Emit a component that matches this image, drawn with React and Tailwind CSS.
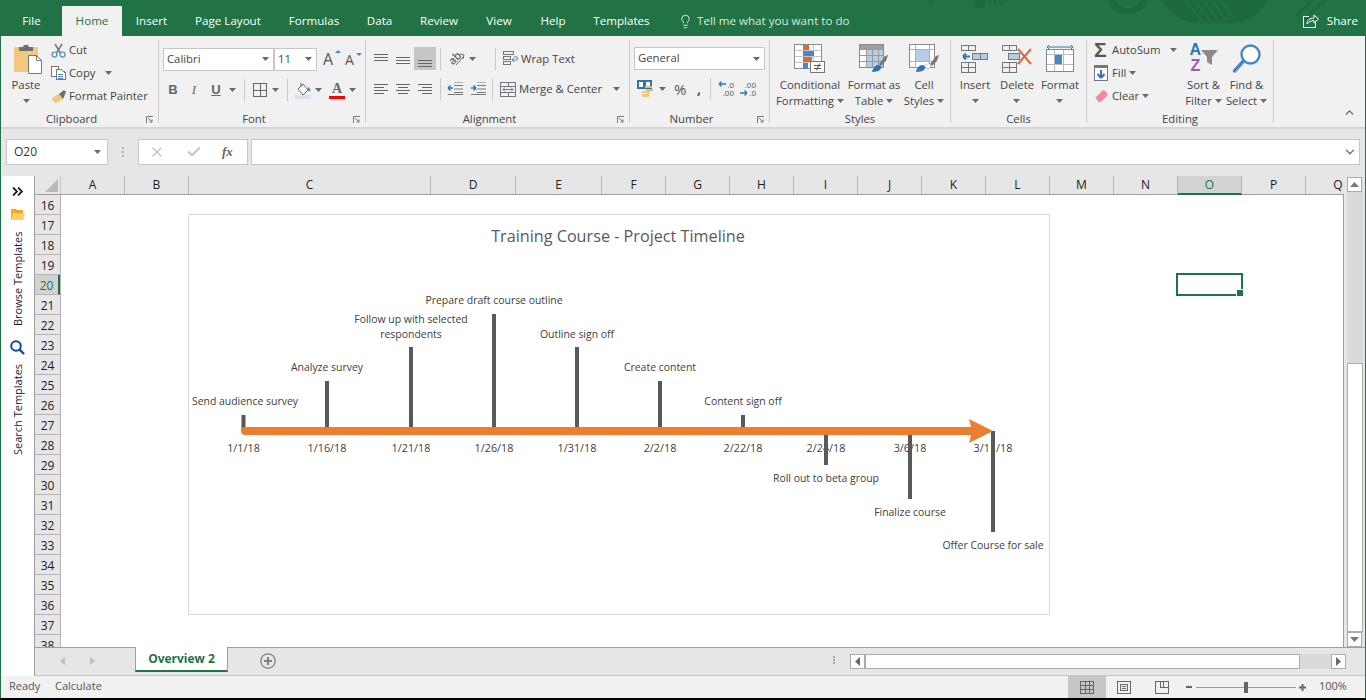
import React from "react";
import { ChevronDown, ChevronUp, Check, X, Lightbulb } from "lucide-react";

const tabs = [
  { name: "File", w: "w-[61px]" },
  { name: "Home", w: "w-[60px]", active: true },
  { name: "Insert", w: "w-[59px]" },
  { name: "Page Layout", w: "w-[94px]" },
  { name: "Formulas", w: "w-[78px]" },
  { name: "Data", w: "w-[53px]" },
  { name: "Review", w: "w-[66px]" },
  { name: "View", w: "w-[54px]" },
  { name: "Help", w: "w-[54px]" },
  { name: "Templates", w: "w-[83px]" },
];

const columns = [
  { n: "A", w: "w-[64px]" },
  { n: "B", w: "w-[64px]" },
  { n: "C", w: "w-[242px]" },
  { n: "D", w: "w-[85px]" },
  { n: "E", w: "w-[86px]" },
  { n: "F", w: "w-[64px]" },
  { n: "G", w: "w-[64px]" },
  { n: "H", w: "w-[64px]" },
  { n: "I", w: "w-[64px]" },
  { n: "J", w: "w-[64px]" },
  { n: "K", w: "w-[64px]" },
  { n: "L", w: "w-[64px]" },
  { n: "M", w: "w-[64px]" },
  { n: "N", w: "w-[64px]" },
  { n: "O", w: "w-[64px]", active: true },
  { n: "P", w: "w-[64px]" },
  { n: "Q", w: "w-[39px] pl-[26px]" },
];

const rows = Array.from({ length: 23 }, (_, i) => 16 + i);

// chart milestones, coordinates are page pixels (svg viewBox starts at the frame corner)
const milestones = [
  { x: 243.5, date: "1/1/18", end: 415, label: ["Send audience survey"], lx: 245, ly: 405 },
  { x: 327, date: "1/16/18", end: 381, label: ["Analyze survey"], ly: 371 },
  { x: 411, date: "1/21/18", end: 347, label: ["Follow up with selected", "respondents"], ly: 323 },
  { x: 494, date: "1/26/18", end: 314, label: ["Prepare draft course outline"], ly: 304 },
  { x: 577, date: "1/31/18", end: 347, label: ["Outline sign off"], ly: 338 },
  { x: 660, date: "2/2/18", end: 381, label: ["Create content"], ly: 371 },
  { x: 743, date: "2/22/18", end: 415, label: ["Content sign off"], ly: 405 },
  { x: 826, date: "2/24/18", end: 465, label: ["Roll out to beta group"], ly: 482 },
  { x: 910, date: "3/6/18", end: 499, label: ["Finalize course"], ly: 516 },
  { x: 993, date: "3/11/18", end: 532, label: ["Offer Course for sale"], ly: 549 },
];

const Caret = ({ className = "" }) => (
  <svg width="7" height="4" viewBox="0 0 7 4" className={`shrink-0 ${className}`}>
    <path d="M0 0h7L3.5 4z" fill="#6a6a6a" />
  </svg>
);

const Sep = ({ className = "" }) => <div className={`w-px h-[22px] bg-[#c9c9c9] shrink-0 ${className}`} />;

const Group = ({ label, width, launcher = true, children }) => (
  <div className={`flex flex-col my-[4px] border-r border-[#c9c9c9] shrink-0 ${width}`}>
    <div className="flex-1 flex min-h-0">{children}</div>
    <div className={`relative h-[14px] pt-[4px] leading-[12px] text-center text-[11.3px] text-[#444] ${launcher ? "pr-[16px]" : ""}`}>
      {label}
      {launcher && (
        <svg width="8" height="8" viewBox="0 0 8 8" className="absolute right-[4px] top-[7px]">
          <path d="M.5 7V.5H7M2 2l4 4M6 3.5V6H3.5" fill="none" stroke="#777" />
        </svg>
      )}
    </div>
  </div>
);

const BigBtn = ({ width, icon, lines }) => (
  <div className={`flex flex-col items-center pt-[4px] shrink-0 ${width}`}>
    <div className="h-[30px] flex items-center justify-center">{icon}</div>
    <div className="mt-[3px] text-[11.3px] leading-[16px] text-[#444] text-center whitespace-nowrap">
      <div>{lines[0]}</div>
      <div className="flex items-center justify-center gap-[3px] h-[16px]">
        {lines[1]}
        <Caret />
      </div>
    </div>
  </div>
);

const Combo = ({ width, text }) => (
  <div className={`h-[23px] bg-white border border-[#c6c6c6] flex items-center justify-between pl-[3px] pr-[4px] text-[11.3px] text-[#444] shrink-0 ${width}`}>
    <span>{text}</span>
    <Caret />
  </div>
);

const SmallRow = ({ icon, text, caret }) => (
  <div className="h-[20px] flex items-center text-[11.3px] text-[#444] whitespace-nowrap">
    <div className="w-[18px] shrink-0 flex items-center">{icon}</div>
    <span>{text}</span>
    {caret}
  </div>
);

const Lines = ({ ys, xs }) => (
  <svg width="16" height="16" viewBox="0 0 16 16" shapeRendering="crispEdges">
    {ys.map((y, i) => (
      <rect key={y} x={xs[i][0]} y={y} width={xs[i][1]} height="1" fill="#666" />
    ))}
  </svg>
);

const PasteIcon = () => (
  <svg width="30" height="30" viewBox="0 0 30 30" className="ml-[4px]">
    <rect x="1" y="3" width="24" height="25" rx="1" fill="#f0c97f" />
    <path d="M6 7V3h4c0-3 6-3 6 0h4v4z" fill="#6f6f6f" />
    <path d="M15.5 11.5h8l5 5v13h-13z" fill="#fff" stroke="#777" />
    <path d="M23.5 11.5v5h5" fill="none" stroke="#777" />
  </svg>
);

const CutIcon = () => (
  <svg width="15" height="15" viewBox="0 0 15 15" fill="none">
    <path d="M4 1l5.5 9M11 1L5.5 10" stroke="#777" strokeWidth="1.5" />
    <circle cx="3.5" cy="11.5" r="2.5" stroke="#4a86c5" strokeWidth="1.2" />
    <circle cx="11.5" cy="11.5" r="2.5" stroke="#4a86c5" strokeWidth="1.2" />
  </svg>
);

const CopyIcon = () => (
  <svg width="15" height="14" viewBox="0 0 15 14" fill="#fff" shapeRendering="crispEdges">
    <path d="M.5.5h7v10h-7z" stroke="#777" />
    <path d="M5.5 3.5h5l3.5 3v7h-8.500z" stroke="#777" />
    <path d="M7 8h5M7 10h5M7 12h5" stroke="#4a86c5" />
  </svg>
);

const PainterIcon = () => (
  <svg width="16" height="15" viewBox="0 0 16 15">
    <path d="M1 9l7-4 4 5-7 4c-2 0-4-3-4-5z" fill="#f0c97f" />
    <path d="M8 5l5-4 2 2-3 7z" fill="#6f6f6f" />
  </svg>
);

const BordersIcon = () => (
  <svg width="14" height="14" viewBox="0 0 14 14" fill="none" stroke="#666" shapeRendering="crispEdges">
    <path d="M.5.5h13v13H.5zM7 .5v13M.5 7h13" />
  </svg>
);

const FillIcon = () => (
  <svg width="17" height="17" viewBox="0 0 17 17">
    <rect x="0" y="13" width="16" height="4" fill="#d5e4f3" />
    <path d="M3 7l5-5 5 6-5 5z" fill="#fff" stroke="#666" />
    <path d="M6 1v4" stroke="#666" />
    <path d="M13 5c2 1 3 3 2 5-1-1-2-2-3-2z" fill="#4a86c5" />
  </svg>
);

const FontColorIcon = () => (
  <div className="w-[16px] flex flex-col items-center font-bold text-[14px] leading-[13px] text-[#666]">
    A
    <div className="w-[16px] h-[3px] mt-[1px] bg-[#ff0000]" />
  </div>
);

const OrientIcon = () => (
  <div className="relative w-[16px] h-[16px]">
    <span className="absolute -left-[1px] top-[1px] text-[11px] leading-[12px] font-semibold text-[#666] rotate-[-45deg]">ab</span>
    <svg width="16" height="16" viewBox="0 0 16 16" fill="none" className="absolute left-0 top-0">
      <path d="M7 14l7-8M11 3l4 1-1 4" stroke="#666" />
    </svg>
  </div>
);

const WrapIcon = () => (
  <svg width="16" height="15" viewBox="0 0 16 15" fill="none" stroke="#777" shapeRendering="crispEdges">
    <path d="M.5.5h10v3H.5zM.5 5.500h7v3h-7zM.5 10.500h7v3h-7z" />
    <path d="M9 9h5c1 0 1-3 0-3h-3M9 9l2-2M9 9l2 2" stroke="#4a86c5" shapeRendering="auto" />
  </svg>
);

const MergeIcon = () => (
  <svg width="16" height="15" viewBox="0 0 16 15" fill="none" stroke="#777" shapeRendering="crispEdges">
    <path d="M.5.5h15v14H.5zM.5 4.500h15M.5 10.500h15M8 .5v4M8 10.500v4" />
    <path d="M3 7.500h10M3 7.500l2-2M3 7.500l2 2M13 7.500l-2-2M13 7.500l-2 2" stroke="#4a86c5" shapeRendering="auto" />
  </svg>
);

const IndentIcon = ({ flip }) => (
  <svg width="16" height="14" viewBox="0 0 16 14" fill="none">
    <path d="M7 1h9M7 4.500h9M7 8h9M7 11.500h9M1 13.500h15" stroke="#777" transform="translate(0 -1)" />
    <path d={flip ? "M6 6H1M1 6l2.500-2.500M1 6l2.500 2.500" : "M1 6h5M6 6L3.500 3.500M6 6L3.500 8.500"} stroke="#2f75b5" strokeWidth="1.5" />
  </svg>
);

const CurrencyIcon = () => (
  <svg width="18" height="18" viewBox="0 0 18 18" shapeRendering="crispEdges">
    <rect x="0" y="0" width="15" height="9" fill="#2f75b5" />
    <rect x="2" y="2" width="11" height="5" fill="#fff" />
    <rect x="6" y="2" width="3" height="5" fill="#2f75b5" />
    <rect x="9" y="9" width="7" height="2" fill="#e9b868" />
    <rect x="5" y="11" width="8" height="2" fill="#f0c97f" />
    <rect x="8" y="6" width="7" height="2" fill="#e9b868" />
    <rect x="5" y="14" width="7" height="3" fill="#f0c97f" />
  </svg>
);

const DecIcon = ({ more }) => (
  <div className="relative w-[16px] h-[16px] text-[8px] leading-[8px] font-medium text-[#555] text-right">
    <div>{more ? ".0" : ".00"}</div>
    <div>{more ? ".00" : ".0"}</div>
    <svg width="8" height="6" viewBox="0 0 8 6" className={more ? "absolute left-0 top-0" : "absolute left-0 bottom-[1px]"}>
      <path d={more ? "M8 3H1M1 3l2.500-2.500M1 3l2.500 2.500" : "M0 3h7M7 3L4.500.5M7 3L4.500 5.500"} stroke="#2f75b5" strokeWidth="1.3" fill="none" />
    </svg>
  </div>
);

const CondIcon = () => (
  <svg width="32" height="30" viewBox="0 0 32 30" shapeRendering="crispEdges">
    <rect x=".5" y=".5" width="27" height="24" fill="#fff" stroke="#8a8a8a" />
    <path d="M9 1v24M19 1v24M1 6.500h26M1 12.500h26M1 18.500h26" stroke="#c4c4c4" />
    <rect x="9" y="1" width="6" height="5" fill="#d9683f" />
    <rect x="9" y="7" width="11" height="5" fill="#4a86c5" />
    <rect x="9" y="13" width="9" height="5" fill="#d9683f" />
    <rect x="9" y="19" width="5" height="6" fill="#4a86c5" />
    <rect x="16.500" y="17.500" width="14" height="11" fill="#fff" stroke="#777" />
    <path d="M20 21.500h7M20 24.500h7M25.500 19.500l-3 7" stroke="#555" fill="none" shapeRendering="auto" />
  </svg>
);

const TableIcon = () => (
  <svg width="30" height="30" viewBox="0 0 30 30">
    <g shapeRendering="crispEdges">
      <rect x=".5" y=".5" width="24" height="23" fill="#fff" stroke="#8a8a8a" />
      <rect x="1" y="1" width="23" height="4" fill="#9e9e9e" />
      <rect x="7" y="5" width="17" height="18" fill="#b6cde6" />
      <path d="M7 1v23M13 1v23M19 1v23M1 5.500h23M1 11.500h23M1 17.500h23" stroke="#9a9a9a" />
    </g>
    <path d="M20 20l6-8 3-1-2 6-5 5z" fill="#7a7a7a" />
    <path d="M13 28c1-5 5-9 9-6 1 3-2 6-9 6z" fill="#2f75b5" />
  </svg>
);

const StyleIcon = () => (
  <svg width="30" height="30" viewBox="0 0 30 30">
    <g shapeRendering="crispEdges">
      <rect x=".5" y=".5" width="25" height="23" fill="#fff" stroke="#8a8a8a" />
      <rect x="6" y="6" width="14" height="11" fill="#b6cde6" />
      <path d="M1 5.500h24M1 17.500h24M6 1v23M20 1v23" stroke="#b0b0b0" />
    </g>
    <path d="M21 20l6-8 3-1-2 6-5 5z" fill="#7a7a7a" />
    <path d="M7 28c1-5 5-9 9-6 1 3-2 6-9 6z" fill="#2f75b5" />
    <path d="M15 22l5-3 2 3-3 3z" fill="#fff" stroke="#888" strokeWidth=".5" />
  </svg>
);

const InsertIcon = () => (
  <svg width="28" height="28" viewBox="0 0 28 28" fill="none" shapeRendering="crispEdges">
    <path d="M.5.5h14v5H.5zM7.500.5v5M.5 17.500h14v10H.5zM.5 22.500h14M7.500 17.500v10" stroke="#777" />
    <rect x="11.500" y="8.500" width="15" height="6" fill="#b6cde6" stroke="#777" />
    <path d="M19 9v5" stroke="#777" />
    <path d="M9 11.500H2M2 11.500l3-3M2 11.500l3 3" stroke="#2f75b5" strokeWidth="2" shapeRendering="auto" />
  </svg>
);

const DeleteIcon = () => (
  <svg width="30" height="28" viewBox="0 0 30 28" fill="none" shapeRendering="crispEdges">
    <path d="M.5.5h14v5H.5zM7.500.5v5M.5 17.500h14v10H.5zM.5 22.500h14M7.500 17.500v10" stroke="#777" />
    <rect x="6.500" y="8.500" width="11" height="6" fill="#b6cde6" stroke="#777" />
    <path d="M16 3l13 15M29 3L16 18" stroke="#d9683f" strokeWidth="2" shapeRendering="auto" transform="translate(0 1)" />
  </svg>
);

const FormatIcon = () => (
  <svg width="29" height="31" viewBox="0 0 29 31" fill="none" shapeRendering="crispEdges">
    <path d="M1 2h26M1 2l2-2M1 2l2 2M27 2l-2-2M27 2l-2 2" stroke="#2f75b5" transform="translate(0 1)" shapeRendering="auto" />
    <rect x=".5" y="5.500" width="27" height="22" fill="#fff" stroke="#888" />
    <rect x="8" y="10" width="8" height="10" fill="#4a86c5" />
    <path d="M8 6v21M17 6v21M1 10.500h26M1 20.500h26" stroke="#bcbcbc" />
  </svg>
);

const SumIcon = () => (
  <span className="block text-[21px] leading-[20px] font-bold text-[#555] font-['Liberation_Sans',sans-serif]">Σ</span>
);

const FillDownIcon = () => (
  <svg width="14" height="16" viewBox="0 0 14 16" shapeRendering="crispEdges">
    <rect x=".5" y=".5" width="13" height="15" fill="#fff" stroke="#777" />
    <rect x="0" y="0" width="14" height="3" fill="#777" />
    <path d="M7 5v7M7 13L3.500 9M7 13l3.500-4" stroke="#2f75b5" strokeWidth="2" fill="none" shapeRendering="auto" />
  </svg>
);

const EraserIcon = () => (
  <svg width="14" height="13" viewBox="0 0 14 13">
    <path d="M1 8l7-7c1-1 2-1 3 0l2 2c1 1 1 2 0 3l-6 6H4z" fill="#ec8c9c" />
    <path d="M1 8l3 4" stroke="#fff" />
  </svg>
);

const SortIcon = () => (
  <div className="relative w-[30px] h-[30px]">
    <span className="absolute left-[1px] top-[-2px] text-[16px] leading-[16px] font-bold text-[#2f75b5] font-['Liberation_Sans',sans-serif]">A</span>
    <span className="absolute left-[2px] top-[14px] text-[16px] leading-[16px] font-bold text-[#9b59b6] font-['Liberation_Sans',sans-serif]">Z</span>
    <svg width="18" height="16" viewBox="0 0 18 16" className="absolute left-[12px] top-[6px]">
      <path d="M0 0h17l-6 7v8l-5-3V7z" fill="#8a8a8a" />
    </svg>
  </div>
);

const FindIcon = () => (
  <svg width="30" height="30" viewBox="0 0 30 30" fill="none">
    <circle cx="18.500" cy="10.500" r="9" stroke="#4a86c5" strokeWidth="2.400" fill="#fff" />
    <path d="M11.500 17L2.500 27" stroke="#4a86c5" strokeWidth="3.500" strokeLinecap="round" />
  </svg>
);

const Ribbon = () => (
  <div className="h-[93px] bg-[#f1f1f1] border-b-2 border-[#d4d4d4] flex relative shrink-0">
    <Group label="Clipboard" width="w-[158px]">
      <div className="w-[50px] flex flex-col items-center pt-[4px] text-[11.3px] text-[#444]">
        <PasteIcon />
        <div className="mt-[3px] leading-[16px]">Paste</div>
        <Caret className="mt-[6px]" />
      </div>
      <div className="flex flex-col gap-[3px]">
        <SmallRow icon={<CutIcon />} text="Cut" />
        <SmallRow icon={<CopyIcon />} text="Copy" caret={<Caret className="ml-[10px]" />} />
        <SmallRow icon={<PainterIcon />} text="Format Painter" />
      </div>
    </Group>

    <Group label="Font" width="w-[207px]">
      <div className="flex flex-col pt-[7px] pl-[4px]">
        <div className="flex items-center">
          <Combo width="w-[111px]" text="Calibri" />
          <Combo width="w-[43px]" text="11" />
          <span className="ml-[6px] w-[15px] text-[16px] text-[#555] relative">
            A
            <svg width="6" height="3" viewBox="0 0 6 3" className="absolute right-[-3px] top-[3px]"><path d="M0 3h6L3 0z" fill="#4a86c5" /></svg>
          </span>
          <span className="ml-[7px] w-[13px] text-[14px] text-[#555] relative">
            A
            <svg width="6" height="3" viewBox="0 0 6 3" className="absolute right-[-4px] top-[4px]"><path d="M0 0h6L3 3z" fill="#4a86c5" /></svg>
          </span>
        </div>
        <div className="flex items-center h-[22px] mt-[8px] text-[#666] text-[13px] font-['Liberation_Serif',serif]">
          <span className="w-[20px] text-center font-bold font-['Liberation_Sans',sans-serif]">B</span>
          <span className="w-[22px] text-center italic">I</span>
          <span className="w-[22px] text-center font-bold underline font-['Liberation_Sans',sans-serif]">U</span>
          <Caret className="ml-[2px]" />
          <Sep className="ml-[8px]" />
          <div className="ml-[8px]"><BordersIcon /></div>
          <Caret className="ml-[5px]" />
          <Sep className="ml-[8px]" />
          <div className="ml-[7px]"><FillIcon /></div>
          <Caret className="ml-[3px]" />
          <div className="ml-[7px]"><FontColorIcon /></div>
          <Caret className="ml-[4px]" />
        </div>
      </div>
    </Group>

    <Group label="Alignment" width="w-[264px]">
      <div className="flex flex-col pt-[7px] pl-[8px]">
        <div className="flex items-center h-[23px]">
          <Lines ys={[3, 6, 9]} xs={[[0, 14], [0, 14], [0, 14]]} />
          <div className="ml-[6px]"><Lines ys={[6, 9, 12]} xs={[[0, 14], [0, 14], [0, 14]]} /></div>
          <div className="ml-[2px] w-[22px] h-[23px] bg-[#c6c6c6] flex items-center justify-center"><Lines ys={[9, 12, 15]} xs={[[1, 14], [1, 14], [1, 14]]} /></div>
          <Sep className="ml-[4px]" />
          <div className="ml-[8px]"><OrientIcon /></div>
          <Caret className="ml-[4px]" />
          <Sep className="ml-[19px]" />
          <div className="ml-[7px]"><WrapIcon /></div>
          <span className="ml-[2px] mt-[1px] text-[11.3px] text-[#444] whitespace-nowrap">Wrap Text</span>
        </div>
        <div className="flex items-center h-[22px] mt-[8px]">
          <Lines ys={[3, 6, 9, 12]} xs={[[0, 14], [0, 10], [0, 14], [0, 10]]} />
          <div className="ml-[6px]"><Lines ys={[3, 6, 9, 12]} xs={[[0, 14], [2, 10], [0, 14], [2, 10]]} /></div>
          <div className="ml-[6px]"><Lines ys={[3, 6, 9, 12]} xs={[[0, 14], [4, 10], [0, 14], [4, 10]]} /></div>
          <Sep className="ml-[6px]" />
          <div className="ml-[6px]"><IndentIcon flip /></div>
          <div className="ml-[7px]"><IndentIcon /></div>
          <Sep className="ml-[6px]" />
          <div className="ml-[7px]"><MergeIcon /></div>
          <span className="ml-[3px] text-[11.3px] text-[#444] whitespace-nowrap">Merge &amp; Center</span>
          <Caret className="ml-[11px]" />
        </div>
      </div>
    </Group>

    <Group label="Number" width="w-[140px]">
      <div className="flex flex-col pt-[7px] pl-[4px]">
        <Combo width="w-[131px]" text="General" />
        <div className="flex items-center h-[22px] mt-[8px]">
          <div className="ml-[3px]"><CurrencyIcon /></div>
          <Caret className="ml-[4px]" />
          <span className="ml-[8px] w-[14px] text-[15px] text-[#555]">%</span>
          <span className="ml-[9px] w-[8px] text-[14px] font-bold text-[#555] leading-[10px]">,</span>
          <Sep className="ml-[5px]" />
          <div className="ml-[7px]"><DecIcon more /></div>
          <div className="ml-[6px]"><DecIcon /></div>
        </div>
      </div>
    </Group>

    <Group label="Styles" width="w-[181px]" launcher={false}>
      <BigBtn width="w-[80px]" icon={<CondIcon />} lines={["Conditional", "Formatting"]} />
      <BigBtn width="w-[48px]" icon={<TableIcon />} lines={["Format as", "Table"]} />
      <BigBtn width="w-[52px]" icon={<StyleIcon />} lines={["Cell", "Styles"]} />
    </Group>

    <Group label="Cells" width="w-[136px]" launcher={false}>
      <BigBtn width="w-[48px]" icon={<InsertIcon />} lines={["Insert", ""]} />
      <BigBtn width="w-[36px]" icon={<DeleteIcon />} lines={["Delete", ""]} />
      <BigBtn width="w-[50px]" icon={<FormatIcon />} lines={["Format", ""]} />
    </Group>

    <Group label="Editing" width="w-[187px]" launcher={false}>
      <div className="w-[96px] flex flex-col gap-[3px] pl-[7px] shrink-0">
        <SmallRow icon={<SumIcon />} text="AutoSum" caret={<Caret className="ml-[10px]" />} />
        <SmallRow icon={<FillDownIcon />} text="Fill" caret={<Caret className="ml-[3px]" />} />
        <SmallRow icon={<EraserIcon />} text="Clear" caret={<Caret className="ml-[3px]" />} />
      </div>
      <BigBtn width="w-[41px]" icon={<SortIcon />} lines={["Sort &", "Filter"]} />
      <BigBtn width="w-[45px]" icon={<FindIcon />} lines={["Find &", "Select"]} />
    </Group>

    <ChevronUp size={13} strokeWidth={2.5} className="absolute right-[9px] bottom-[8px] text-[#666]" />
  </div>
);

const TitleBar = () => (
  <div className="h-[36px] bg-[#217346] flex items-end relative shrink-0 text-[11.6px] text-white overflow-hidden">
    <svg width="470" height="36" viewBox="896 0 470 36" className="absolute right-0 top-0" fill="#1e693f">
      <path d="M929 0h6l-3 3zM976 0h10v8h-10zM990 0h2v6h-2zM995 0h2v6h-2zM1000 0h2v6h-2zM1005 0h2v3h-2z" />
      <path d="M1110 0a19 14 0 0 0 38 0h-7a12 8 0 0 1-24 0z" />
      <path d="M1163 0c8 15 22 23 36 23h36c14 0 26-10 34-23z" />
      <path d="M1186 0l16 20M1195 0l16 21M1204 0l15 21M1213 0l14 20M1222 0l12 17" stroke="#217346" strokeWidth="1.500" fill="none" />
      <path d="M1296 15l16-15h4l-18 17zM1304 19l20-19h4l-22 21z" />
    </svg>
    <div className="flex items-end relative">
      {tabs.map((t) => (
        <div
          key={t.name}
          className={`${t.w} h-[30px] flex items-center justify-center shrink-0 ${t.active ? "bg-[#f1f1f1] text-[#217346]" : ""}`}
        >
          {t.name}
        </div>
      ))}
    </div>
    <div className="flex items-center h-[30px] ml-[15px] relative text-[#d9e8df]">
      <Lightbulb size={15} strokeWidth={1.25} className="text-white" />
      <span className="ml-[4px]">Tell me what you want to do</span>
    </div>
    <div className="flex items-center h-[30px] ml-auto pr-[7px] relative">
      <svg width="16" height="14" viewBox="0 0 16 14" fill="none" stroke="#fff">
        <path d="M6 2.500H.5v11h12V8" />
        <path d="M4 10c0-4 3-6 7-6V1l4.500 4L11 9V6.500C8 6.500 6 8 4 10z" />
      </svg>
      <span className="ml-[8px]">Share</span>
    </div>
  </div>
);

const FormulaBar = () => (
  <div className="h-[47px] bg-[#e6e6e6] flex pt-[10px] shrink-0">
    <div className="ml-[5px] w-[102px] h-[26px] bg-white border border-[#c6c6c6] flex items-center justify-between pl-[7px] pr-[6px] text-[12px] text-[#333]">
      <span>O20</span>
      <Caret />
    </div>
    <div className="w-[30px] flex flex-col items-center justify-center gap-[2px] h-[26px]">
      <div className="w-[2px] h-[2px] bg-[#b0b0b0]" />
      <div className="w-[2px] h-[2px] bg-[#b0b0b0]" />
      <div className="w-[2px] h-[2px] bg-[#b0b0b0]" />
    </div>
    <div className="w-[110px] h-[26px] bg-white border border-[#c6c6c6] flex items-center text-[#c4c4c4]">
      <X size={16} strokeWidth={2} className="ml-[10px]" />
      <Check size={16} strokeWidth={3} className="ml-[21px]" />
      <span className="ml-[20px] text-[13px] italic font-bold text-[#666] font-['Liberation_Serif',serif]">fx</span>
    </div>
    <div className="ml-[3px] w-[1109px] h-[26px] bg-white border border-[#c6c6c6] flex items-center justify-end pr-[2px]">
      <ChevronDown size={14} strokeWidth={2.5} className="text-[#777]" />
    </div>
  </div>
);

const Chart = () => (
  <svg
    width="862"
    height="401"
    viewBox="188 214 862 401"
    className="absolute left-[127px] top-[19px] font-['Open_Sans',sans-serif]"
  >
    <rect x="188.500" y="214.500" width="861" height="400" fill="#fff" stroke="#d9d9d9" />
    <text x="618" y="242" textAnchor="middle" fontSize="16.200" fill="#595959">
      Training Course - Project Timeline
    </text>
    <g fill="#404040" textAnchor="middle">
      {milestones.map((m) => (
        <text key={m.date} x={m.x} y="452" fontSize="10.800">{m.date}</text>
      ))}
      {milestones.map((m) =>
        m.label.map((line, i) => (
          <text key={line} x={m.lx || m.x} y={m.ly + i * 15} fontSize="10.450">{line}</text>
        ))
      )}
    </g>
    {milestones.map((m) => (
      <rect
        key={m.date}
        x={m.x - 2}
        y={Math.min(m.end, 431)}
        width="4"
        height={Math.abs(m.end - 431)}
        fill="#595959"
      />
    ))}
    <path d="M245 427h726l-2-8 24 12-24 12 2-8H245a4 4 0 0 1 0-8z" fill="#ed7d31" />
  </svg>
);

const Sheet = () => (
  <div className="flex-1 flex flex-col min-w-0">
    <div className="flex-1 flex min-h-0">
      <div className="flex-1 flex flex-col min-w-0">
        {/* column letters */}
        <div className="h-[18px] flex bg-[#e6e6e6] border-b-2 border-[#9e9e9e] text-[12px] leading-[17px] text-[#222] shrink-0 box-content -mb-[1px]">
          <div className="w-[26px] relative shrink-0 border-r border-[#c6c6c6]">
            <svg width="13" height="13" viewBox="0 0 13 13" className="absolute right-[2px] bottom-[2px]">
              <path d="M13 0v13H0z" fill="#b9b9b9" />
            </svg>
          </div>
          {columns.map((c) => (
            <div
              key={c.n}
              className={`${c.w} shrink-0 text-center border-r border-[#b4b4b4] ${c.active ? "bg-[#d2d2d2] text-[#217346] border-b-2 border-b-[#217346] -mb-[1px]" : ""}`}
            >
              {c.n}
            </div>
          ))}
        </div>
        <div className="flex-1 flex min-h-0 overflow-hidden">
          <div className="w-[26px] shrink-0 bg-[#e6e6e6] border-r border-[#b4b4b4]">
            {rows.map((r) => (
              <div
                key={r}
                className={`h-[20px] text-center text-[12px] leading-[21px] border-b border-[#b4b4b4] ${r === 20 ? "bg-[#d2d2d2] text-[#217346] border-r-2 border-r-[#217346]" : "text-[#222]"}`}
              >
                {r}
              </div>
            ))}
          </div>
          <div className="flex-1 relative bg-white border-r border-[#9e9e9e]">
            <Chart />
            {/* selected cell O20 */}
            <div className="absolute left-[1115px] top-[78px] w-[67px] h-[23px] border-2 border-[#217346]">
              <div className="absolute -right-[3px] -bottom-[3px] w-[6px] h-[6px] bg-[#217346] border border-white box-content" />
            </div>
          </div>
        </div>
      </div>
      {/* vertical scrollbar */}
      <div className="w-[21px] bg-[#e6e6e6] flex flex-col items-center pt-[1px] shrink-0">
        <div className="w-[16px] flex-1 flex flex-col bg-[#dadada]">
          <ScrollBtn><svg width="9" height="5" viewBox="0 0 9 5"><path d="M0 5h9L4.500 0z" fill="#777" /></svg></ScrollBtn>
          <div className="h-[171px] shrink-0" />
          <div className="flex-1 bg-white border border-[#ababab]" />
          <ScrollBtn><svg width="9" height="5" viewBox="0 0 9 5"><path d="M0 0h9L4.500 5z" fill="#777" /></svg></ScrollBtn>
        </div>
      </div>
    </div>

    {/* sheet tabs and horizontal scrollbar */}
    <div className="h-[29px] bg-[#e6e6e6] border-t border-[#9e9e9e] border-b border-b-[#c6c6c6] flex items-start shrink-0">
      <svg width="40" height="8" viewBox="0 0 40 8" className="ml-[25px] mt-[9px] shrink-0">
        <path d="M5 0v8L0 4zM30 0v8l5-4z" fill="#c0c0c0" />
      </svg>
      <div className="ml-[35px] -mt-[1px] w-[93px] h-[25px] bg-white border-x border-[#9e9e9e] border-b-2 border-b-[#217346] flex items-center justify-center text-[12px] font-bold text-[#217346] shrink-0">
        Overview 2
      </div>
      <svg width="16" height="16" viewBox="0 0 16 16" className="ml-[32px] mt-[5px] shrink-0" fill="none" stroke="#808080">
        <circle cx="8" cy="8" r="7.200" strokeWidth="1.300" />
        <path d="M8 4v8M4 8h8" strokeWidth="2" />
      </svg>
      <div className="ml-[557px] mt-[8px] flex flex-col gap-[1px] shrink-0">
        <div className="w-[2px] h-[2px] bg-[#a8a8a8]" />
        <div className="w-[2px] h-[2px] bg-[#a8a8a8]" />
        <div className="w-[2px] h-[2px] bg-[#a8a8a8]" />
      </div>
      <div className="ml-[15px] mt-[6px] w-[496px] h-[15px] flex bg-[#dadada] shrink-0">
        <ScrollBtn><svg width="5" height="9" viewBox="0 0 5 9"><path d="M5 0v9L0 4.500z" fill="#666" /></svg></ScrollBtn>
        <div className="w-[435px] bg-white border border-[#ababab]" />
        <div className="flex-1" />
        <ScrollBtn><svg width="5" height="9" viewBox="0 0 5 9"><path d="M0 0v9l5-4.500z" fill="#666" /></svg></ScrollBtn>
      </div>
    </div>
  </div>
);

const ScrollBtn = ({ children }) => (
  <div className="w-[15px] h-[15px] bg-white border border-[#ababab] flex items-center justify-center shrink-0 self-center">
    {children}
  </div>
);

const SidePane = () => (
  <div className="w-[34px] bg-white border-r border-[#9e9e9e] flex flex-col items-center shrink-0 text-[11px] text-[#1a1a2e]">
    <svg width="11" height="9" viewBox="0 0 11 9" className="mt-[11px] shrink-0" fill="none" stroke="#222" strokeWidth="1.800">
      <path d="M1 .5L5 4.500 1 8.500M6 .5l4 4-4 4" />
    </svg>
    <svg width="14" height="13" viewBox="0 0 14 13" className="mt-[12px] shrink-0">
      <path d="M0 1h5l1 1h6v10H0z" fill="#f5a623" />
      <path d="M2 5h12l-2 7H0z" fill="#fbd06b" />
    </svg>
    <div className="mt-[10px] h-[95px] leading-[16px] [writing-mode:vertical-rl] rotate-180 whitespace-nowrap text-center shrink-0">Browse Templates</div>
    <svg width="15" height="15" viewBox="0 0 15 15" className="mt-[14px] shrink-0" fill="none" stroke="#0b46a8">
      <circle cx="6" cy="6" r="4.800" strokeWidth="2" />
      <path d="M9.500 9.500l4.500 4.500" strokeWidth="2.400" />
    </svg>
    <div className="mt-[8px] h-[92px] leading-[16px] [writing-mode:vertical-rl] rotate-180 whitespace-nowrap text-center shrink-0">Search Templates</div>
  </div>
);

const StatusBar = () => (
  <div className="h-[22px] bg-[#f1f1f1] flex items-center shrink-0 text-[11px] text-[#555]">
    <span className="ml-[8px] w-[46px] -mt-[2px]">Ready</span>
    <span className="-mt-[2px]">Calculate</span>
    <div className="ml-auto flex items-center h-[22px]">
      <div className="w-[38px] h-[22px] bg-[#c6c6c6] flex items-center justify-center">
        <svg width="14" height="13" viewBox="0 0 14 13" fill="none" stroke="#666" shapeRendering="crispEdges">
          <path d="M.5.5h13v12H.5zM5 .5v12M9.500.5v12M.5 4.500h13M.5 8.500h13" />
        </svg>
      </div>
      <svg width="14" height="13" viewBox="0 0 14 13" className="ml-[11px]" fill="none" stroke="#666" shapeRendering="crispEdges">
        <path d="M.5.5h13v12H.5zM3.500 3.500h7v6h-7zM5 5.500h4M5 7.500h4" />
      </svg>
      <svg width="14" height="13" viewBox="0 0 14 13" className="ml-[24px]" fill="none" stroke="#666" shapeRendering="crispEdges">
        <path d="M.5.5h13v12H.5zM5.500.5v6h3v-6M8.500 6.500h5" />
      </svg>
      <div className="ml-[17px] w-[6px] h-[2px] bg-[#666]" />
      <div className="ml-[4px] relative w-[100px] h-px bg-[#9a9a9a]">
        <div className="absolute left-[48px] -top-[5px] w-[4px] h-[11px] bg-[#666]" />
      </div>
      <svg width="7" height="7" viewBox="0 0 7 7" className="ml-[3px]" stroke="#666" strokeWidth="2">
        <path d="M0 3.500h7M3.500 0v7" />
      </svg>
      <span className="ml-[13px] mr-[19px] w-[27px] -mt-[2px]">100%</span>
    </div>
  </div>
);

export default function App() {
  return (
    <div className="w-[1366px] h-[700px] overflow-hidden bg-black font-['Open_Sans',sans-serif]">
      <div className="h-[698px] flex flex-col border-x border-[#217346] bg-[#e6e6e6]">
        <TitleBar />
        <Ribbon />
        <FormulaBar />
        <div className="flex-1 flex min-h-0">
          <SidePane />
          <Sheet />
        </div>
        <StatusBar />
      </div>
    </div>
  );
}
